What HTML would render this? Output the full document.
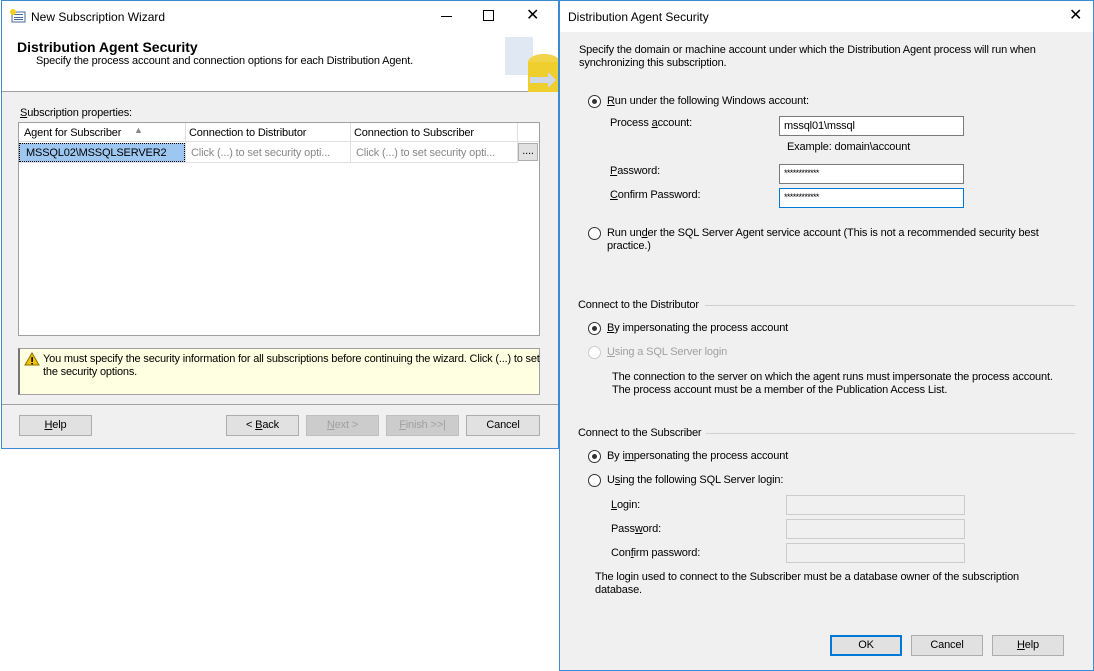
<!DOCTYPE html>
<html><head><meta charset="utf-8"><style>
*{box-sizing:border-box;margin:0;padding:0}
body{width:1094px;height:671px;background:#fff;font-family:"Liberation Sans",sans-serif;font-size:11px;letter-spacing:-0.15px;color:#000;position:relative;overflow:hidden}
.a{position:absolute;white-space:nowrap}
.btn{position:absolute;height:21px;border:1px solid #adadad;background:#e1e1e1;text-align:center;line-height:19px;font-size:11px}
.dis{color:#a0a0a0;border-color:#bfbfbf;background:#ccc}
.inp{position:absolute;height:20px;border:1px solid #7a7a7a;background:#fff;padding-left:4px;line-height:18px}
.inpd{position:absolute;height:20px;border:1px solid #ccc;background:#f0f0f0}
.rad{position:absolute;width:13px;height:13px;border:1px solid #333;border-radius:50%;background:#fff}
.rad.on::after{content:"";position:absolute;left:3px;top:3px;width:5px;height:5px;border-radius:50%;background:#333}
.rad.d{border-color:#ccc}
.pw{font-size:9px;letter-spacing:-0.6px;line-height:17px}
u{text-decoration:underline}
</style></head><body>
<!-- left window -->
<div class="a" style="left:1px;top:0;width:558px;height:449px;border:1px solid #3c8bd2;background:#f0f0f0"></div>
<div class="a" style="left:2px;top:1px;width:556px;height:91px;background:#fff;border-bottom:1px solid #a0a0a0"></div>
<svg class="a" style="left:10px;top:9px" width="16" height="14"><rect x="2" y="3" width="13" height="10" fill="#fff" stroke="#4a6a9a"/><rect x="4" y="5" width="9" height="1" fill="#4a6a9a"/><rect x="4" y="8" width="9" height="1" fill="#4a6a9a"/><rect x="4" y="10" width="9" height="1" fill="#4a6a9a"/><circle cx="3" cy="3" r="3" fill="#f5d020"/></svg>
<div class="a" style="left:31px;top:10px;font-size:12px;letter-spacing:0">New Subscription Wizard</div>
<div class="a" style="left:441px;top:16px;width:11px;height:1px;background:#000"></div>
<div class="a" style="left:483px;top:10px;width:11px;height:11px;border:1px solid #000"></div>
<div class="a" style="left:526px;top:5px;font-size:16px">✕</div>
<div class="a" style="left:17px;top:39px;font-size:14px;font-weight:bold;letter-spacing:0">Distribution Agent Security</div>
<div class="a" style="left:36px;top:55px">Specify the process account and connection options for each Distribution Agent.</div>
<svg class="a" style="left:500px;top:32px" width="58" height="60"><rect x="5" y="5" width="28" height="38" fill="#dfe8f3"/><ellipse cx="44" cy="30" rx="16" ry="8" fill="#f2d44a"/><rect x="28" y="30" width="32" height="30" fill="#efcf2e"/><path d="M30 45h18v-5l8 8-8 8v-5h-18z" fill="#cfd8e6"/></svg>
<div class="a" style="left:20px;top:107px"><u>S</u>ubscription properties:</div>
<div class="a" style="left:18px;top:122px;width:522px;height:214px;background:#fff;border:1px solid #a0a0a0"></div>
<div class="a" style="left:19px;top:123px;width:520px;height:19px;border-bottom:1px solid #e0e0e0"></div>
<div class="a" style="left:185px;top:123px;width:1px;height:39px;background:#e0e0e0"></div>
<div class="a" style="left:350px;top:123px;width:1px;height:39px;background:#e0e0e0"></div>
<div class="a" style="left:517px;top:123px;width:1px;height:39px;background:#e0e0e0"></div>
<div class="a" style="left:19px;top:162px;width:499px;height:1px;background:#e0e0e0"></div>
<div class="a" style="left:24px;top:127px">Agent for Subscriber</div>
<div class="a" style="left:134px;top:125px;color:#888;font-size:9px">▲</div>
<div class="a" style="left:189px;top:127px">Connection to Distributor</div>
<div class="a" style="left:354px;top:127px">Connection to Subscriber</div>
<div class="a" style="left:19px;top:143px;width:166px;height:19px;background:#9dc6f0;border:1px dotted #000;padding:3px 6px">MSSQL02\MSSQLSERVER2</div>
<div class="a" style="left:191px;top:147px;color:#888">Click (...) to set security opti...</div>
<div class="a" style="left:356px;top:147px;color:#888">Click (...) to set security opti...</div>
<div class="a" style="left:518px;top:143px;width:20px;height:18px;border:1px solid #adadad;background:#e1e1e1;text-align:center;line-height:14px">....</div>
<div class="a" style="left:18px;top:348px;width:522px;height:47px;background:#ffffe1;border:1px solid #a0a0a0;border-left:2px solid #777"></div>
<svg class="a" style="left:24px;top:352px" width="16" height="14"><path d="M8 1L15 13H1z" fill="#f2c500" stroke="#8a6d00"/><rect x="7.3" y="5" width="1.6" height="5" fill="#000"/><rect x="7.3" y="11" width="1.6" height="1.4" fill="#000"/></svg>
<div class="a" style="left:43px;top:353px;line-height:13px;letter-spacing:-0.18px">You must specify the security information for all subscriptions before continuing the wizard. Click (...) to set<br>the security options.</div>
<div class="a" style="left:2px;top:404px;width:556px;height:1px;background:#a0a0a0"></div>
<div class="btn" style="left:19px;top:415px;width:73px"><u>H</u>elp</div>
<div class="btn" style="left:226px;top:415px;width:73px">&lt; <u>B</u>ack</div>
<div class="btn dis" style="left:306px;top:415px;width:73px"><u>N</u>ext &gt;</div>
<div class="btn dis" style="left:386px;top:415px;width:73px"><u>F</u>inish &gt;&gt;|</div>
<div class="btn" style="left:466px;top:415px;width:74px">Cancel</div>
<!-- right window -->
<div class="a" style="left:559px;top:0;width:535px;height:671px;border:1px solid #3c8bd2;background:#f0f0f0"></div>
<div class="a" style="left:560px;top:1px;width:533px;height:31px;background:#fff"></div>
<div class="a" style="left:568px;top:10px;font-size:12px;letter-spacing:0">Distribution Agent Security</div>
<div class="a" style="left:1069px;top:5px;font-size:16px">✕</div>
<div class="a" style="left:579px;top:44px;line-height:13px">Specify the domain or machine account under which the Distribution Agent process will run when<br>synchronizing this subscription.</div>
<div class="rad on" style="left:588px;top:95px"></div>
<div class="a" style="left:607px;top:95px"><u>R</u>un under the following Windows account:</div>
<div class="a" style="left:610px;top:117px">Process <u>a</u>ccount:</div>
<div class="inp" style="left:779px;top:116px;width:185px">mssql01\mssql</div>
<div class="a" style="left:787px;top:141px">Example: domain\account</div>
<div class="a" style="left:610px;top:165px"><u>P</u>assword:</div>
<div class="inp pw" style="left:779px;top:164px;width:185px">************</div>
<div class="a" style="left:610px;top:189px"><u>C</u>onfirm Password:</div>
<div class="inp pw" style="left:779px;top:188px;width:185px;border-color:#0078d7">************</div>
<div class="rad" style="left:588px;top:227px"></div>
<div class="a" style="left:607px;top:227px;line-height:13px">Run un<u>d</u>er the SQL Server Agent service account (This is not a recommended security best<br>practice.)</div>
<div class="a" style="left:578px;top:299px">Connect to the Distributor</div>
<div class="a" style="left:705px;top:305px;width:370px;height:1px;background:#d0d0d0"></div>
<div class="rad on" style="left:588px;top:322px"></div>
<div class="a" style="left:607px;top:322px"><u>B</u>y impersonating the process account</div>
<div class="rad d" style="left:588px;top:346px"></div>
<div class="a" style="left:607px;top:346px;color:#a0a0a0"><u>U</u>sing a SQL Server login</div>
<div class="a" style="left:612px;top:371px;line-height:13px">The connection to the server on which the agent runs must impersonate the process account.<br>The process account must be a member of the Publication Access List.</div>
<div class="a" style="left:578px;top:427px">Connect to the Subscriber</div>
<div class="a" style="left:706px;top:433px;width:369px;height:1px;background:#d0d0d0"></div>
<div class="rad on" style="left:588px;top:450px"></div>
<div class="a" style="left:607px;top:450px">By i<u>m</u>personating the process account</div>
<div class="rad" style="left:588px;top:474px"></div>
<div class="a" style="left:607px;top:474px">U<u>s</u>ing the following SQL Server login:</div>
<div class="a" style="left:611px;top:499px"><u>L</u>ogin:</div>
<div class="inpd" style="left:786px;top:495px;width:179px"></div>
<div class="a" style="left:611px;top:523px">Pass<u>w</u>ord:</div>
<div class="inpd" style="left:786px;top:519px;width:179px"></div>
<div class="a" style="left:611px;top:547px">Con<u>f</u>irm password:</div>
<div class="inpd" style="left:786px;top:543px;width:179px"></div>
<div class="a" style="left:595px;top:571px;line-height:13px">The login used to connect to the Subscriber must be a database owner of the subscription<br>database.</div>
<div class="btn" style="left:830px;top:635px;width:72px;border:2px solid #0078d7;line-height:17px">OK</div>
<div class="btn" style="left:911px;top:635px;width:72px">Cancel</div>
<div class="btn" style="left:992px;top:635px;width:72px"><u>H</u>elp</div>
</body></html>
